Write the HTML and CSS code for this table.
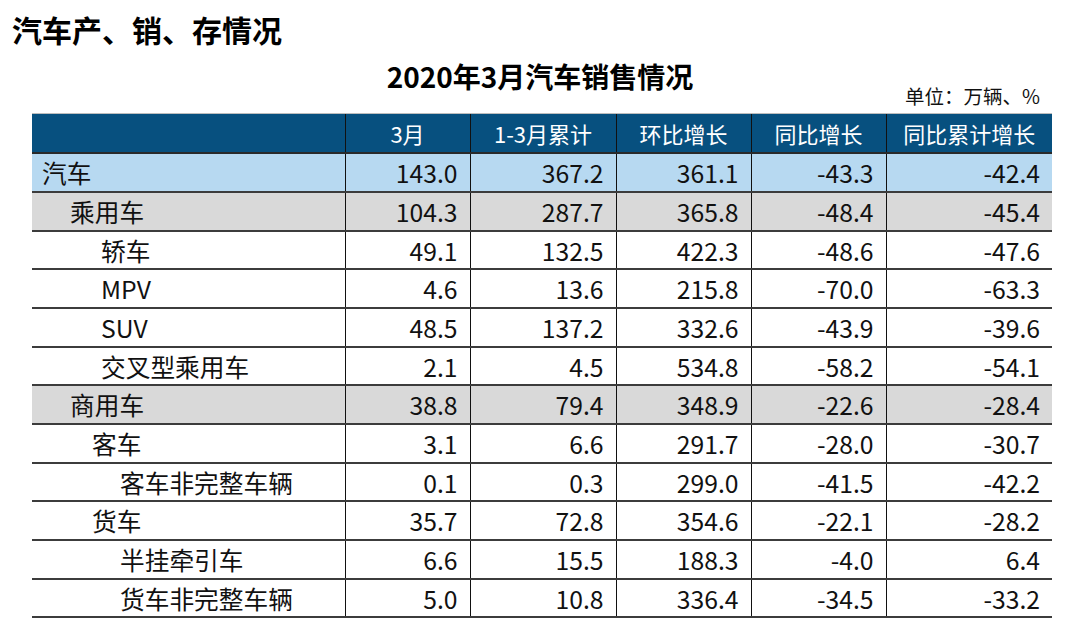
FILE: index.html
```html
<!DOCTYPE html>
<html lang="zh-CN">
<head>
<meta charset="utf-8">
<title>汽车产、销、存情况</title>
<link rel="stylesheet" href="styles.css">
</head>
<body>
<div class="page">
  <h1 class="title">汽车产、销、存情况</h1>
  <h2 class="caption">2020年3月汽车销售情况</h2>
  <div class="unit">单位：万辆、%</div>
  <table class="sales">
    <colgroup>
      <col class="c-name"><col class="c-m"><col class="c-cum"><col class="c-mom"><col class="c-yoy"><col class="c-yoycum">
    </colgroup>
    <thead>
      <tr><th></th><th>3月</th><th>1-3月累计</th><th>环比增长</th><th>同比增长</th><th>同比累计增长</th></tr>
    </thead>
    <tbody>
      <tr class="lvl0"><td class="name">汽车</td><td>143.0</td><td>367.2</td><td>361.1</td><td>-43.3</td><td>-42.4</td></tr>
      <tr class="lvl1"><td class="name">乘用车</td><td>104.3</td><td>287.7</td><td>365.8</td><td>-48.4</td><td>-45.4</td></tr>
      <tr class="lvl2"><td class="name">轿车</td><td>49.1</td><td>132.5</td><td>422.3</td><td>-48.6</td><td>-47.6</td></tr>
      <tr class="lvl2"><td class="name">MPV</td><td>4.6</td><td>13.6</td><td>215.8</td><td>-70.0</td><td>-63.3</td></tr>
      <tr class="lvl2"><td class="name">SUV</td><td>48.5</td><td>137.2</td><td>332.6</td><td>-43.9</td><td>-39.6</td></tr>
      <tr class="lvl2"><td class="name">交叉型乘用车</td><td>2.1</td><td>4.5</td><td>534.8</td><td>-58.2</td><td>-54.1</td></tr>
      <tr class="lvl1"><td class="name">商用车</td><td>38.8</td><td>79.4</td><td>348.9</td><td>-22.6</td><td>-28.4</td></tr>
      <tr class="lvl2b"><td class="name">客车</td><td>3.1</td><td>6.6</td><td>291.7</td><td>-28.0</td><td>-30.7</td></tr>
      <tr class="lvl3"><td class="name">客车非完整车辆</td><td>0.1</td><td>0.3</td><td>299.0</td><td>-41.5</td><td>-42.2</td></tr>
      <tr class="lvl2b"><td class="name">货车</td><td>35.7</td><td>72.8</td><td>354.6</td><td>-22.1</td><td>-28.2</td></tr>
      <tr class="lvl3"><td class="name">半挂牵引车</td><td>6.6</td><td>15.5</td><td>188.3</td><td>-4.0</td><td>6.4</td></tr>
      <tr class="lvl3"><td class="name">货车非完整车辆</td><td>5.0</td><td>10.8</td><td>336.4</td><td>-34.5</td><td>-33.2</td></tr>
    </tbody>
  </table>
</div>
</body>
</html>
```

FILE: styles.css
```css
* { box-sizing: border-box; }
html, body { margin: 0; padding: 0; background: #fff; }
body {
  font-family: "Noto Sans CJK SC", "Noto Sans", sans-serif;
  color: #111;
  width: 1080px;
  height: 626px;
  overflow: hidden;
}
.page { position: relative; }
.title {
  margin: 0;
  padding: 13px 0 0 12px;
  font-size: 30px;
  line-height: 32px;
  font-weight: 700;
  color: #000;
}
.caption {
  margin: 16px 0 0 0;
  font-size: 28px;
  line-height: 30px;
  font-weight: 700;
  text-align: center;
  color: #000;
}
.unit {
  margin-top: -6px;
  padding-right: 40px;
  text-align: right;
  font-size: 19.5px;
  line-height: 22px;
  color: #111;
}
.sales {
  margin: 6px 0 0 32px;
  width: 1020px;
  border-collapse: collapse;
  table-layout: fixed;
  font-size: 24.7px;
}
.c-name { width: 313px; }
.c-m { width: 125px; }
.c-cum { width: 146px; }
.c-mom { width: 135px; }
.c-yoy { width: 135px; }
.c-yoycum { width: 166px; }
.sales thead tr { height: 39px; }
.sales th {
  background: #07507f;
  color: #fff;
  font-weight: 400;
  font-size: 22px;
  line-height: 26px;
  padding: 0;
  text-align: center;
  border-top: 1px solid #bdbdbd;
  border-bottom: 2px solid #2a2a2a;
}
.sales th + th, .sales td + td { border-left: 1.5px solid #111; }
.sales tbody tr { height: 39px; }
.sales tbody tr:nth-child(3n) { height: 38px; }
.sales td {
  padding: 0 12px 0 0;
  text-align: right;
  line-height: 30px;
  border-bottom: 2px solid #3c3c3c;
  white-space: nowrap;
}
.sales td.name { text-align: left; padding-right: 0; }
.lvl0 td { background: #b7d9f1; }
.lvl0 td.name { padding-left: 10px; }
.lvl1 td { background: #d9d9d9; }
.lvl1 td.name { padding-left: 38px; }
.lvl2 td.name { padding-left: 69px; }
.lvl2b td.name { padding-left: 60px; }
.lvl3 td.name { padding-left: 88px; }
```
